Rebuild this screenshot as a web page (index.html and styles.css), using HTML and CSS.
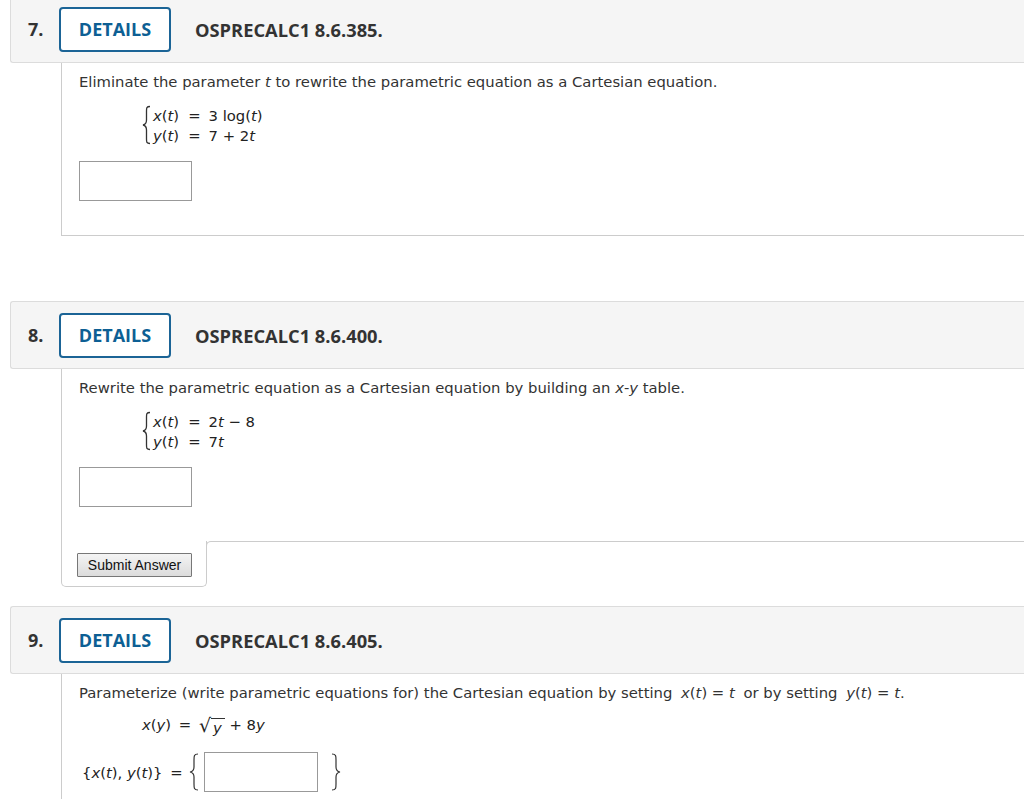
FILE: index.html
```html
<!DOCTYPE html>
<html>
<head>
<meta charset="utf-8">
<link rel="stylesheet" href="styles.css">
</head>
<body>
<div class="page">
  <section class="q q7">
    <div class="qhead">
      <span class="num">7.</span>
      <button class="details">DETAILS</button>
      <span class="title">OSPRECALC1 8.6.385.</span>
    </div>
    <div class="qbody qbody-closed">
      <p class="prompt">Eliminate the parameter <i>t</i> to rewrite the parametric equation as a Cartesian equation.</p>
      <div class="system">
        <svg class="brace" width="9" height="40" viewBox="0 0 9 40"><path d="M8 1.5 C4.5 1.5 4.5 3 4.5 6 L4.5 15 C4.5 18 3.5 19.5 1 20 C3.5 20.5 4.5 22 4.5 25 L4.5 34 C4.5 37 4.5 38.5 8 38.5" fill="none" stroke="#333" stroke-width="1.3"/></svg>
        <div class="rows">
          <span class="lhs"><i>x</i>(<i>t</i>)</span><span class="eq">=</span><span class="rhs">3 log(<i>t</i>)</span>
          <span class="lhs"><i>y</i>(<i>t</i>)</span><span class="eq">=</span><span class="rhs">7 + 2<i>t</i></span>
        </div>
      </div>
      <div class="answer"></div>
    </div>
  </section>

  <section class="q q8">
    <div class="qhead">
      <span class="num">8.</span>
      <button class="details">DETAILS</button>
      <span class="title">OSPRECALC1 8.6.400.</span>
    </div>
    <div class="qbody">
      <p class="prompt">Rewrite the parametric equation as a Cartesian equation by building an <i>x</i>-<i>y</i> table.</p>
      <div class="system">
        <svg class="brace" width="9" height="40" viewBox="0 0 9 40"><path d="M8 1.5 C4.5 1.5 4.5 3 4.5 6 L4.5 15 C4.5 18 3.5 19.5 1 20 C3.5 20.5 4.5 22 4.5 25 L4.5 34 C4.5 37 4.5 38.5 8 38.5" fill="none" stroke="#333" stroke-width="1.3"/></svg>
        <div class="rows">
          <span class="lhs"><i>x</i>(<i>t</i>)</span><span class="eq">=</span><span class="rhs">2<i>t</i> − 8</span>
          <span class="lhs"><i>y</i>(<i>t</i>)</span><span class="eq">=</span><span class="rhs">7<i>t</i></span>
        </div>
      </div>
      <div class="answer"></div>
    </div>
    <div class="qfoot">
      <div class="submit-tab"><button class="submit">Submit Answer</button></div>
      <div class="foot-rest"></div>
    </div>
  </section>

  <section class="q q9">
    <div class="qhead">
      <span class="num">9.</span>
      <button class="details">DETAILS</button>
      <span class="title">OSPRECALC1 8.6.405.</span>
    </div>
    <div class="qbody">
      <p class="prompt">Parameterize (write parametric equations for) the Cartesian equation by setting <span class="inl"><i>x</i>(<i>t</i>) = <i>t</i></span> or by setting <span class="inl inl-last"><i>y</i>(<i>t</i>) = <i>t</i></span>.</p>
      <div class="formula"><i>x</i>(<i>y</i>) <span class="op">=</span> <span class="sqrt"><span class="rad">√</span><span class="under"><i>y</i></span></span> + 8<i>y</i></div>
      <div class="set-row">
        <span class="set-lhs">{<i>x</i>(<i>t</i>), <i>y</i>(<i>t</i>)} <span class="op">=</span></span>
        <svg class="bigbrace" width="12" height="40" viewBox="0 0 12 40"><path d="M10 2 C6 2 6 4 6 8 L6 15 C6 18 5 19.5 2 20 C5 20.5 6 22 6 25 L6 32 C6 36 6 38 10 38" fill="none" stroke="#333" stroke-width="1.2"/></svg>
        <span class="answer answer-inline"></span>
        <svg class="bigbrace closing" width="12" height="40" viewBox="0 0 12 40"><path d="M2 2 C6 2 6 4 6 8 L6 15 C6 18 7 19.5 10 20 C7 20.5 6 22 6 25 L6 32 C6 36 6 38 2 38" fill="none" stroke="#333" stroke-width="1.2"/></svg>
      </div>
    </div>
  </section>
</div>
</body>
</html>
```

FILE: styles.css
```css
html, body {
  margin: 0;
  padding: 0;
  background: #fff;
  overflow: hidden;
}

.page {
  margin-top: -5px;
  padding-left: 10px;
  font-family: "DejaVu Sans", Verdana, sans-serif;
  color: #333;
}

.qhead {
  display: flex;
  align-items: center;
  height: 68px;
  background: #f5f5f5;
  border: 1px solid #dcdcdc;
  border-right: none;
  border-radius: 3px 0 0 3px;
  padding-left: 17px;
  box-sizing: border-box;
}

.num {
  font-family: "Open Sans", sans-serif;
  font-weight: 700;
  font-size: 18px;
  color: #333;
  width: 31px;
  align-self: flex-start;
  margin-top: 21px;
}

.details {
  width: 112px;
  height: 45px;
  background: #fff;
  border: 2px solid #1b6496;
  border-radius: 4px;
  color: #0d5f94;
  font-family: "Open Sans", sans-serif;
  font-weight: 700;
  font-size: 18px;
  padding: 0;
  margin: 0;
}

.title {
  margin-left: 24px;
  font-family: "Open Sans", sans-serif;
  font-weight: 700;
  font-size: 18.3px;
  color: #333;
}

.qbody {
  margin-left: 51px;
  border-left: 1px solid #ccc;
  padding: 10px 0 34px 17px;
  font-size: 14.8px;
}

.qbody-closed {
  border-bottom: 1px solid #ccc;
}

.prompt {
  margin: 0;
  line-height: 18px;
}

.system {
  display: flex;
  align-items: center;
  margin: 14px 0 0 63px;
  height: 40px;
}

.brace {
  display: block;
  margin-right: 2px;
}

.rows {
  display: grid;
  grid-template-columns: auto auto auto;
  grid-auto-rows: 20px;
  align-items: center;
  color: #222;
}

.eq {
  padding: 0 8px 0 9px;
}

.answer {
  display: block;
  width: 113px;
  height: 40px;
  box-sizing: border-box;
  border: 1px solid #999;
  background: #fff;
  margin-top: 16px;
}

.q7 {
  margin-bottom: 65px;
}

.q8 .qbody {
  padding-bottom: 34px;
}

.qfoot {
  display: flex;
  align-items: flex-start;
  margin-left: 51px;
}

.submit-tab {
  width: 146px;
  box-sizing: border-box;
  border: 1px solid #ccc;
  border-top: none;
  border-radius: 0 0 5px 5px;
  padding: 12px 0 9px 15px;
}

.foot-rest {
  flex: 1;
  height: 30px;
  border-top: 1px solid #ccc;
  border-left: 1px solid #ccc;
  border-radius: 5px 0 0 0;
  margin-left: -1px;
}

.submit {
  font-family: "Liberation Sans", Arial, sans-serif;
  font-size: 14px;
  color: #111;
  height: 24px;
  width: 115px;
  padding: 0;
  border: 1px solid #777;
  border-radius: 1px;
  background: linear-gradient(#f4f4f4, #dcdcdc);
}

.q8 {
  margin-bottom: 19px;
}

.q9 .qbody {
  padding-bottom: 20px;
}

.inl {
  margin: 0 4px;
}

.inl-last {
  margin-right: 0;
}

.formula {
  margin: 12px 0 0 63px;
  height: 22px;
  line-height: 22px;
  white-space: pre;
  color: #222;
}

.op {
  padding: 0 3px;
}

.sqrt {
  display: inline-block;
  vertical-align: bottom;
}

.rad {
  font-size: 19px;
  vertical-align: bottom;
  line-height: 21px;
}

.under {
  display: inline-block;
  vertical-align: bottom;
  border-top: 1px solid #333;
  padding: 0 3px 0 2px;
  line-height: 17px;
}

.set-row {
  display: flex;
  align-items: center;
  margin: 16px 0 0 3px;
  height: 40px;
  color: #222;
}

.set-lhs {
  white-space: pre;
  margin-right: 2px;
}

.answer-inline {
  margin: 0 0 0 4px;
  width: 114px;
}

.bigbrace.closing {
  margin-left: 12px;
}
```
